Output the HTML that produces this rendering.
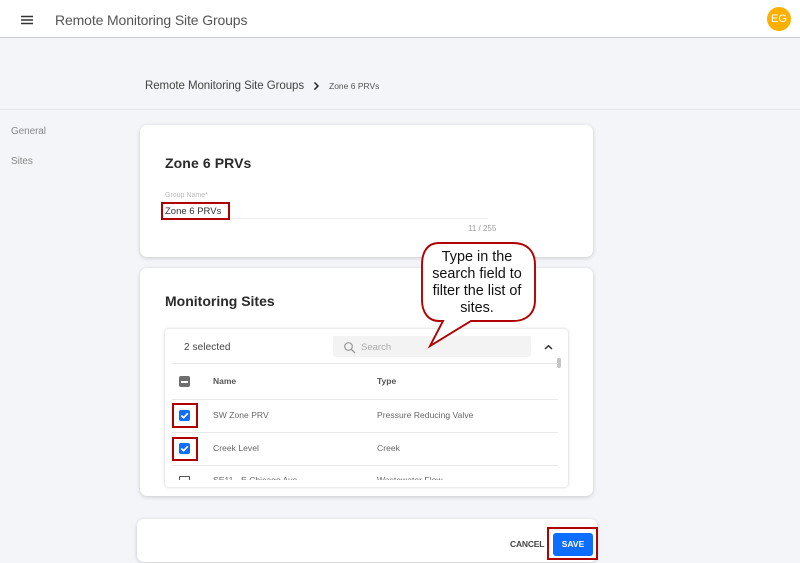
<!DOCTYPE html>
<html>
<head>
<meta charset="utf-8">
<style>
html,body{margin:0;padding:0}
body{width:800px;height:563px;overflow:hidden;background:#f4f5f9;position:relative;font-family:"Liberation Sans",sans-serif;color:#444}
.a{position:absolute;white-space:nowrap}
.card{position:absolute;background:#fff;border-radius:7px;box-shadow:0 1px 4px rgba(0,0,0,.18)}
.red{position:absolute;border:2px solid #b00000;box-sizing:border-box}
.line{position:absolute;height:1px;background:#e8e8e8}
.cb{position:absolute;left:179px;width:11px;height:11px;border-radius:2px;background:#0d6efd}
.t{font-size:8.5px;line-height:12px;color:#666;letter-spacing:.05px}
</style>
</head>
<body>
<div class="a" style="left:0;top:0;width:800px;height:37px;background:#fff;border-bottom:1px solid #c9cbd0"></div>
<svg class="a" style="left:21px;top:15px" width="12" height="10"><path d="M0 1.5H12M0 5H12M0 8.5H12" stroke="#333" stroke-width="1.4" fill="none"/></svg>
<div class="a" style="left:55px;top:12px;font-size:14px;line-height:16px;color:#555;letter-spacing:-.13px">Remote Monitoring Site Groups</div>
<div class="a" style="left:767px;top:7px;width:24px;height:24px;border-radius:50%;background:#fdb000;color:#fff;font-size:11px;line-height:24px;text-align:center">EG</div>

<div class="a" style="left:145px;top:79px;font-size:11.5px;line-height:14px;color:#444;letter-spacing:-.07px">Remote Monitoring Site Groups</div>
<svg class="a" style="left:313px;top:81px" width="8" height="10"><path d="M1.5 1.5L5 5L1.5 8.5" stroke="#222" stroke-width="1.5" fill="none"/></svg>
<div class="a" style="left:329px;top:80px;font-size:8.5px;line-height:12px;color:#555">Zone 6 PRVs</div>
<div class="line" style="left:0;top:109px;width:800px;background:#e8e9ed"></div>

<div class="a" style="left:11px;top:125px;font-size:10px;line-height:14px;color:#888;letter-spacing:-.1px">General</div>
<div class="a" style="left:11px;top:155px;font-size:10px;line-height:14px;color:#888;letter-spacing:-.1px">Sites</div>

<div class="card" style="left:140px;top:125px;width:453px;height:132px"></div>
<div class="a" style="left:165px;top:155px;font-size:14px;line-height:17px;font-weight:bold;color:#2a2a2a;letter-spacing:.1px">Zone 6 PRVs</div>
<div class="a" style="left:165px;top:191px;font-size:7px;line-height:10px;color:#bbb">Group Name*</div>
<div class="a" style="left:165px;top:206px;font-size:9.5px;line-height:12px;color:#333">Zone 6 PRVs</div>
<div class="line" style="left:165px;top:218px;width:323px;background:#ececec"></div>
<div class="red" style="left:161px;top:202px;width:69px;height:18px"></div>
<div class="a" style="left:468px;top:224px;font-size:8px;line-height:10px;color:#999">11 / 255</div>

<div class="card" style="left:140px;top:268px;width:453px;height:228px"></div>
<div class="a" style="left:165px;top:293px;font-size:14px;line-height:17px;font-weight:bold;color:#2a2a2a">Monitoring Sites</div>

<div class="a" style="left:165px;top:329px;width:403px;height:158px;background:#fff;border-radius:4px;box-shadow:0 0 3px rgba(0,0,0,.22);overflow:hidden">
  <div class="a" style="left:14px;top:147px;width:9px;height:9px;border:1.3px solid #555;border-radius:1px"></div>
  <div class="a t" style="left:48px;top:145px">SE11 - E Chicago Ave</div>
  <div class="a t" style="left:212px;top:145px">Wastewater Flow</div>
  <div class="a" style="left:0;top:151px;width:403px;height:7px;background:#fff"></div>
</div>
<div class="a" style="left:184px;top:342px;font-size:10px;line-height:12px;color:#444;letter-spacing:.1px">2 selected</div>
<div class="a" style="left:333px;top:336px;width:198px;height:21px;background:#f3f3f3;border-radius:2px"></div>
<svg class="a" style="left:343px;top:341px" width="14" height="14"><circle cx="5.5" cy="5.5" r="3.8" stroke="#999" stroke-width="1.2" fill="none"/><path d="M8.3 8.3L12 12" stroke="#999" stroke-width="1.3"/></svg>
<div class="a" style="left:361px;top:341.5px;font-size:9.5px;line-height:12px;color:#aaa">Search</div>
<svg class="a" style="left:544px;top:344px" width="9" height="7"><path d="M1 5L4.5 1.8L8 5" stroke="#333" stroke-width="1.5" fill="none"/></svg>
<div class="a" style="left:557px;top:358px;width:4px;height:10px;background:#c4c4c4;border-radius:2px"></div>
<div class="line" style="left:172px;top:363px;width:386px"></div>
<div class="a" style="left:179px;top:376px;width:11px;height:11px;border-radius:2px;background:#6e6e6e"></div>
<div class="a" style="left:181px;top:381px;width:7px;height:1.5px;background:#fff"></div>
<div class="a" style="left:213px;top:375px;font-size:8.5px;line-height:12px;font-weight:bold;color:#555">Name</div>
<div class="a" style="left:377px;top:375px;font-size:8.5px;line-height:12px;font-weight:bold;color:#555">Type</div>
<div class="line" style="left:172px;top:399px;width:386px"></div>
<div class="cb" style="top:410px"></div>
<svg class="a" style="left:179px;top:410px" width="11" height="11"><path d="M2.3 5.5L4.6 7.7L8.8 3.3" stroke="#fff" stroke-width="1.7" fill="none"/></svg>
<div class="a t" style="left:213px;top:409px">SW Zone PRV</div>
<div class="a t" style="left:377px;top:409px">Pressure Reducing Valve</div>
<div class="red" style="left:172px;top:403px;width:26px;height:25px"></div>
<div class="line" style="left:172px;top:432px;width:386px"></div>
<div class="cb" style="top:443px"></div>
<svg class="a" style="left:179px;top:443px" width="11" height="11"><path d="M2.3 5.5L4.6 7.7L8.8 3.3" stroke="#fff" stroke-width="1.7" fill="none"/></svg>
<div class="a t" style="left:213px;top:442px">Creek Level</div>
<div class="a t" style="left:377px;top:442px">Creek</div>
<div class="red" style="left:172px;top:437px;width:26px;height:24px"></div>
<div class="line" style="left:172px;top:465px;width:386px"></div>

<svg class="a" style="left:415px;top:236px" width="130" height="120"><path d="M24 7H98C112 7 120 15 120 29V64C120 77 112 85 98 85H56L15 110L28 85H24C13 85 7 76 7 64V29C7 15 13 7 24 7Z" fill="#fff" stroke="#b00000" stroke-width="1.9"/></svg>
<div class="a" style="left:421px;top:249px;width:112px;text-align:center;font-size:14.4px;line-height:17px;color:#111;white-space:normal">Type in the<br>search field to<br>filter the list of<br>sites.</div>

<div class="card" style="left:137px;top:519px;width:460px;height:43px"></div>
<div class="a" style="left:510px;top:538px;font-size:8.5px;line-height:12px;font-weight:bold;color:#444;letter-spacing:-.2px">CANCEL</div>
<div class="a" style="left:553px;top:533px;width:40px;height:23px;background:#0d6efd;border-radius:3px;color:#fff;font-size:8.5px;line-height:23px;text-align:center;font-weight:bold">SAVE</div>
<div class="red" style="left:547px;top:527px;width:51px;height:33px"></div>
</body>
</html>
